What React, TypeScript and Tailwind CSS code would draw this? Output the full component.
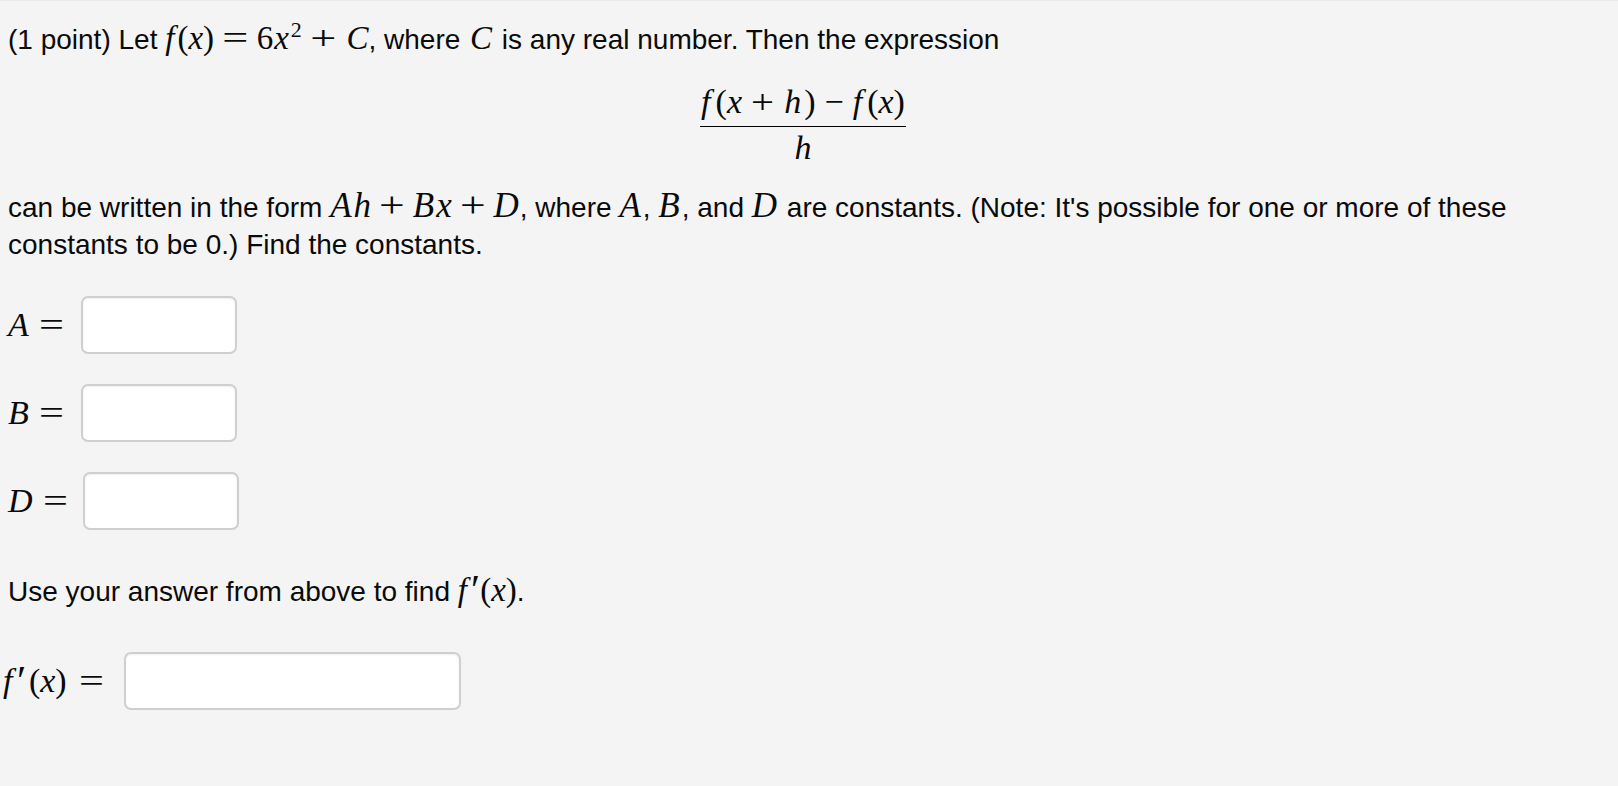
import React from "react";

const SERIF = "font-['Liberation_Serif','Times_New_Roman',serif] not-italic";
const M1 = `${SERIF} text-[33px] leading-[0px]`;
const M2 = `${SERIF} text-[35px] leading-[0px]`;
const FR = `${SERIF} text-[34px] leading-none`;
const LB = `${SERIF} text-[34px] leading-none`;

function V({ children, className = "" }: { children: React.ReactNode; className?: string }) {
  return <span className={`italic ${className}`}>{children}</span>;
}

function Op({ children, cls }: { children: React.ReactNode; cls: string }) {
  return <span className={`inline-block ${cls}`}>{children}</span>;
}

function Box({ w }: { w: string }) {
  return (
    <div
      className={`${w} h-[58px] shrink-0 rounded-[7px] border-2 border-[#cfcfcf] bg-white shadow-[inset_0_1px_2px_rgba(0,0,0,0.07)]`}
    />
  );
}

export default function App() {
  return (
    <div className="min-h-screen w-full border-t border-[#e9e9e9] bg-[#f4f4f4] pl-2 pr-5 pt-[20px] font-['Liberation_Sans',Arial,sans-serif] text-[28px] text-[#0a0a0a]">
      <p className="leading-[38px]">
        (1 point) Let{" "}
        <span className={M1}>
          <V>f</V>
          <span className="ml-[3px]">(</span>
          <V>x</V>)<Op cls="scale-x-[1.4] mx-[12px]">=</Op>6<V className="ml-[1px]">x</V>
          <span className="relative -top-[12px] ml-[2px] text-[22px]">2</span>
          <Op cls="scale-x-[1.4] mx-[12px]">+</Op>
          <V className="ml-[2px]">C</V>
        </span>
        , where{" "}
        <span className={M1}>
          <V className="ml-[2px] mr-[2px]">C</V>
        </span>{" "}
        is any real number. Then the expression
      </p>

      <div className="mt-[26px] flex justify-center">
        <div className="inline-flex flex-col items-stretch">
          <div className={`${FR} block px-[1px] text-center`}>
            <V>f</V>
            <span className="ml-[5px]">(</span>
            <V>x</V>
            <Op cls="scale-x-[1.2] ml-[11px] mr-[12px]">+</Op>
            <V>h</V>
            <span className="ml-[3px]">)</span>
            <span className="mx-[9px]">−</span>
            <V>f</V>
            <span className="ml-[5px]">(</span>
            <V>x</V>)
          </div>
          <div className="mt-[7px] h-px bg-black" />
          <div className={`${FR} mt-[4px] block text-center`}>
            <V>h</V>
          </div>
        </div>
      </div>

      <p className="mt-[24px] max-w-[1552px] leading-[37px]">
        can be written in the form{" "}
        <span className={M2}>
          <V>A</V>
          <V className="ml-[2px]">h</V>
          <Op cls="scale-x-[1.3] mx-[11px]">+</Op>
          <V>B</V>
          <V className="ml-[2px]">x</V>
          <Op cls="scale-x-[1.3] mx-[11px]">+</Op>
          <V className="mr-[1px]">D</V>
        </span>
        , where{" "}
        <span className={M2}>
          <V className="mr-[2px]">A</V>
        </span>
        ,{" "}
        <span className={M2}>
          <V className="mr-[2px]">B</V>
        </span>
        , and{" "}
        <span className={M2}>
          <V className="mr-[2px]">D</V>
        </span>{" "}
        are constants. (Note: It's possible for one or more of these constants to be 0.) Find the constants.
      </p>

      <div className="mt-[33px] flex items-start">
        <span className={`${LB} mt-[12px] w-[73px] shrink-0`}>
          <V>A</V>
          <Op cls="scale-x-[1.3] ml-[13px]">=</Op>
        </span>
        <Box w="w-[156px]" />
      </div>

      <div className="mt-[30px] flex items-start">
        <span className={`${LB} mt-[12px] w-[73px] shrink-0`}>
          <V>B</V>
          <Op cls="scale-x-[1.3] ml-[13px]">=</Op>
        </span>
        <Box w="w-[156px]" />
      </div>

      <div className="mt-[30px] flex items-start">
        <span className={`${LB} mt-[12px] w-[75px] shrink-0`}>
          <V>D</V>
          <Op cls="scale-x-[1.3] ml-[13px]">=</Op>
        </span>
        <Box w="w-[156px]" />
      </div>

      <p className="mt-[43px] leading-[38px]">
        Use your answer from above to find{" "}
        <span className={M1}>
          <V>f</V>
          <span className="ml-[5px] inline-block scale-125">′</span>
          <span className="ml-[1px]">(</span>
          <V>x</V>)
        </span>
        .
      </p>

      <div className="mt-[41px] flex items-start">
        <span className={`${LB} -ml-[5px] mt-[12px] w-[121px] shrink-0`}>
          <V>f</V>
          <span className="ml-[6px] inline-block scale-125">′</span>
          <span className="ml-[3px]">(</span>
          <V>x</V>)<Op cls="scale-x-[1.3] ml-[15px]">=</Op>
        </span>
        <Box w="w-[337px]" />
      </div>
    </div>
  );
}
